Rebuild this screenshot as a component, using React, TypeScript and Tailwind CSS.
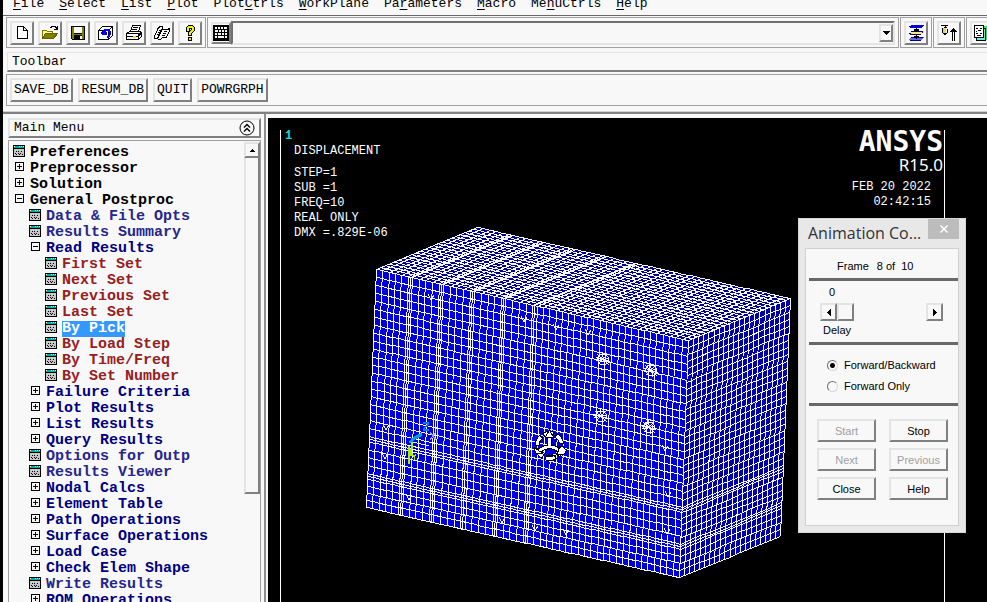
import { useState, type ReactNode } from "react";
import clsx from "clsx";

type Point = [number, number];

interface TreeItem {
  label: string;
  level: 0 | 1 | 2;
  kind: "sheet" | "open" | "closed";
}

const menus = [
  ["", "F", "ile"],
  ["", "S", "elect"],
  ["", "L", "ist"],
  ["", "P", "lot"],
  ["Plot", "C", "trls"],
  ["", "W", "orkPlane"],
  ["Pa", "r", "ameters"],
  ["", "M", "acro"],
  ["Me", "n", "uCtrls"],
  ["", "H", "elp"],
];

const tree: TreeItem[] = [
  { label: "Preferences", level: 0, kind: "sheet" },
  { label: "Preprocessor", level: 0, kind: "closed" },
  { label: "Solution", level: 0, kind: "closed" },
  { label: "General Postproc", level: 0, kind: "open" },
  { label: "Data & File Opts", level: 1, kind: "sheet" },
  { label: "Results Summary", level: 1, kind: "sheet" },
  { label: "Read Results", level: 1, kind: "open" },
  { label: "First Set", level: 2, kind: "sheet" },
  { label: "Next Set", level: 2, kind: "sheet" },
  { label: "Previous Set", level: 2, kind: "sheet" },
  { label: "Last Set", level: 2, kind: "sheet" },
  { label: "By Pick", level: 2, kind: "sheet" },
  { label: "By Load Step", level: 2, kind: "sheet" },
  { label: "By Time/Freq", level: 2, kind: "sheet" },
  { label: "By Set Number", level: 2, kind: "sheet" },
  { label: "Failure Criteria", level: 1, kind: "closed" },
  { label: "Plot Results", level: 1, kind: "closed" },
  { label: "List Results", level: 1, kind: "closed" },
  { label: "Query Results", level: 1, kind: "closed" },
  { label: "Options for Outp", level: 1, kind: "sheet" },
  { label: "Results Viewer", level: 1, kind: "sheet" },
  { label: "Nodal Calcs", level: 1, kind: "closed" },
  { label: "Element Table", level: 1, kind: "closed" },
  { label: "Path Operations", level: 1, kind: "closed" },
  { label: "Surface Operations", level: 1, kind: "closed" },
  { label: "Load Case", level: 1, kind: "closed" },
  { label: "Check Elem Shape", level: 1, kind: "closed" },
  { label: "Write Results", level: 1, kind: "sheet" },
  { label: "ROM Operations", level: 1, kind: "closed" },
];

const raised =
  "border-2 border-t-[#e4e4e4] border-l-[#e4e4e4] border-r-[#808080] border-b-[#808080] bg-[#f8f8f8]";
const mono = "font-['Liberation_Mono',monospace]";

/* ---------- toolbar icons ---------- */

function Icon({ children }: { children: ReactNode }) {
  return (
    <svg
      className="shrink-0"
      width="18"
      height="18"
      viewBox="0 0 18 18"
      shapeRendering="crispEdges"
      fill="none"
    >
      {children}
    </svg>
  );
}

const NewIcon = () => (
  <Icon>
    <path d="M4.500 2.500h6l4 4v8h-10zM10.500 2.500v4h4" stroke="#000" fill="#fff" />
  </Icon>
);

const OpenIcon = () => (
  <Icon>
    <path d="M1.500 14V6.500h4l1 1h5v3" fill="#ffff66" stroke="#777700" />
    <path d="M1.500 14.500l3-5h12l-4 5z" fill="#808000" stroke="#606000" />
    <path d="M9 3.500h1v-1h4v1h1v2M16.500 2v4M13 5.500h4" stroke="#000" />
  </Icon>
);

const SaveIcon = () => (
  <Icon>
    <path d="M2.500 2.500h13v13h-12l-1-1z" fill="#808000" stroke="#000" />
    <path d="M5 3h8v6H5z" fill="#f8f8f8" />
    <path d="M5 11h8v5H5z" fill="#000" />
    <path d="M11 12h2v3h-2z" fill="#fff" />
    <path d="M5 9.500h8" stroke="#000" />
  </Icon>
);

const RestoreIcon = () => (
  <Icon>
    <path d="M1 6h10v10H1zM2 5l3-3h11v9l-4 4V6z" fill="#fff" />
    <path d="M1.500 6.500h10v9h-10zM1.500 6.500l4-4h10l-4 4M15.500 2.500v9l-4 4" stroke="#000" />
    <path d="M4 8h1V7h1V6h1V5h5v1h1v1h1v4h-1v2h-1v1h-2v-2h1v-1h1V8h-1V7H9v1h1v3H5v-1H4z" fill="#0000ee" />
  </Icon>
);

const PrintIcon = () => (
  <Icon>
    <path d="M5.500 7.500l2-6h8l-2 6M8 3.500h5M7 5.500h5" stroke="#000" fill="#fff" />
    <path
      d="M1.500 9.500l3-2h10l2 1v4l-3 3h-12zM1.500 9.500h12v6M13.500 9.500l3-1M2 12.500h11M13 12.500l3-3"
      stroke="#000"
    />
    <path d="M8 12h3v2H8z" fill="#e6e600" />
  </Icon>
);

const ReportIcon = () => (
  <Icon>
    <path d="M5.500 3.500l2-1h2v2l-4 8-1 2h-3v-2zM9.500 4.500l1 1h4l2-1v2l-3 7h-4l-2 2h-3" stroke="#000" />
    <path d="M6 6.500h2M5 8.500h2M4 10.500h2M11 7.500h3M10 9.500h3M9 11.500h3" stroke="#000" />
  </Icon>
);

const HelpIcon = () => (
  <Icon>
    <path
      d="M5.500 7V3.500l2-2h4l2 2v3l-3 3v2h-3v-3l3-3v-1h-2V7zM7.500 13.500h3v3h-3z"
      fill="#e6e600"
      stroke="#000"
    />
    <path d="M6 6.500V4l2-2h3l2 2v2l-3 3v2H8V9l3-3V4H8v2.500z" fill="#f0f000" />
  </Icon>
);

const KeyboardIcon = () => (
  <svg width="16" height="16" viewBox="0 0 16 16" shapeRendering="crispEdges">
    <path d="M0 0h16v16H0z" fill="#000" />
    <path
      d="M2 2h2v2H2zM5 2h2v2H5zM8 2h2v2H8zM11 2h3v2h-3zM2 5h3v2H2zM6 5h2v2H6zM9 5h2v2H9zM12 5h2v2h-2zM2 8h2v2H2zM5 8h3v2H5zM9 8h2v2H9zM12 8h2v2h-2zM2 11h2v2H2zM5 11h6v2H5zM12 11h2v2h-2z"
      fill="#f8f8f8"
    />
  </svg>
);

const LayersIcon = () => (
  <Icon>
    <path d="M4 1h13v1h-1v1h-1v1H3V3H2V2h2z" fill="#0000dd" />
    <path d="M4 7h13v1h-1v1h-1v1h-1v1H3v-1H2V9h1V8h1z" fill="#ffe680" />
    <path d="M4 7.500h12M2 9.500h2M3 10.500h11M15 8.500h1" stroke="#000080" />
    <path d="M4 13h13v1h-1v1h-1v1h-1v1H3v-1H2v-1h1v-1h1z" fill="#6666ff" />
    <path d="M4 13.500h12M3 16.500h11" stroke="#000080" />
    <path d="M9 4h1v1h2v2h-2v1H9V7H7V5h2zM9 11h1v1h2v2h-2v1H9v-1H7v-2h2z" fill="#000" />
  </Icon>
);

const RaiseIcon = () => (
  <Icon>
    <path d="M1 1.500h7M5 1v2M3.500 3h3M2.500 4v5M3 9.500h4M7.500 5v4M4 10.500h2" stroke="#000" />
    <path d="M3 4h3v5H3z" fill="#e6d060" />
    <path d="M12.500 5v12M14.500 5v12" stroke="#000" />
    <path d="M13 4h1v1h1v1h1v1h1v1h-7V7h1V6h1V5h1z" fill="#000" />
  </Icon>
);

const ContactIcon = () => (
  <Icon>
    <path d="M10 2h8v14h-8z" fill="#00ff40" />
    <path d="M3.500 4.500h9v12h-9z" fill="#66e6e6" stroke="#000" />
    <path d="M1.500 1.500h9v12h-9z" fill="#fff" stroke="#000" />
    <path d="M3 4.500h2M7 4.500h2M3 7.500h1M5 6.500h3M3 9.500h2M7 9.500h2M4 11.500h4" stroke="#000" />
  </Icon>
);

const fileTools = [
  { label: "New Analysis", icon: <NewIcon /> },
  { label: "Open File", icon: <OpenIcon /> },
  { label: "Save", icon: <SaveIcon /> },
  { label: "Restore", icon: <RestoreIcon /> },
  { label: "Print", icon: <PrintIcon /> },
  { label: "Report Generator", icon: <ReportIcon /> },
  { label: "Help", icon: <HelpIcon /> },
];

function ToolButton({ label, children }: { label: string; children: ReactNode }) {
  return (
    <button
      aria-label={label}
      className={clsx("flex size-6 shrink-0 items-center justify-center", raised)}
    >
      {children}
    </button>
  );
}

function ToolGroup({ children, className }: { children: ReactNode; className?: string }) {
  return (
    <div className={clsx("flex items-center border border-[#a0a0a0] px-[3px]", className)}>
      {children}
    </div>
  );
}

/* ---------- main menu ---------- */

function NodeIcon({ kind }: { kind: TreeItem["kind"] }) {
  if (kind === "sheet") {
    return (
      <svg width="12" height="12" viewBox="0 0 12 12" shapeRendering="crispEdges">
        <path d="M0 0h12v12H0z" fill="#000" />
        <path d="M1 1h10v2H1z" fill="#00a8a8" />
        <path d="M1 1h1v1H1z" fill="#ffff80" />
        <path d="M6 1h1v1H6zM8 1h1v1H8zM10 1h1v1h-1z" fill="#a0ffff" />
        <path d="M1 4h10v7H1z" fill="#c8c8c8" />
        <path
          d="M3 6h1v1H3zM5 6h1v1H5zM8 6h1v1H8zM2 8h1v1H2zM5 8h1v1H5zM7 8h1v1H7zM3 9h1v1H3zM6 9h1v1H6zM9 9h1v1H9z"
          fill="#000"
        />
      </svg>
    );
  }
  return (
    <svg width="12" height="12" viewBox="0 0 12 12" shapeRendering="crispEdges" fill="none" stroke="#000">
      <path d="M2.500 1.500h8v8h-8zM4 5.500h5" />
      {kind === "closed" && <path d="M6.500 3v5" />}
    </svg>
  );
}

const indents = ["pl-1", "pl-5", "pl-9"];

function labelColor({ level, kind }: TreeItem) {
  if (level === 0) return "text-black";
  if (level === 2) return "text-[#962020]";
  return kind === "sheet" ? "text-[#26268c]" : "text-[#000080]";
}

function MainMenu() {
  const [selected, setSelected] = useState("By Pick");

  return (
    <aside className="flex w-[263px] shrink-0 flex-col border-r-2 border-[#909090] pt-1 pr-[3px] pl-[5px]">
      <header
        className={clsx("flex h-5 shrink-0 items-center justify-between pr-1 pl-1", raised)}
      >
        <h2 className="text-[13px] leading-4">Main Menu</h2>
        <button aria-label="Collapse menu">
          <svg width="16" height="16" viewBox="0 0 16 16" fill="none" stroke="#000">
            <circle cx="8" cy="8" r="7" />
            <path d="M5 7.500l3-3 3 3M5 11.500l3-3 3 3" strokeWidth="1.300" />
          </svg>
        </button>
      </header>
      <div className="mt-0.5 flex min-h-0 flex-1 border-x border-t border-[#a0a0a0]">
        <ul className="min-w-0 flex-1 overflow-hidden pt-1">
          {tree.map((item) => (
            <li key={item.label} className={clsx("h-4", indents[item.level])}>
              <button
                onClick={() => setSelected(item.label)}
                className="flex h-4 text-[15px] leading-4 font-bold whitespace-nowrap"
              >
                <span className="w-[17px] shrink-0">
                  <NodeIcon kind={item.kind} />
                </span>
                <span
                  className={
                    item.label === selected ? "bg-[#3399ff] text-white" : labelColor(item)
                  }
                >
                  {item.label}
                </span>
              </button>
            </li>
          ))}
        </ul>
        <div className="flex w-4 shrink-0 flex-col pt-px">
          <button
            aria-label="Scroll up"
            className={clsx("flex h-4 shrink-0 items-center justify-center", raised)}
          >
            <svg width="5" height="3" viewBox="0 0 5 3" shapeRendering="crispEdges">
              <path d="M2 0h1v1h1v1h1v1H0V2h1V1h1z" />
            </svg>
          </button>
          <div className={clsx("h-[73%] border-t-0", raised)} />
        </div>
      </div>
    </aside>
  );
}

/* ---------- finite element model ---------- */

const A: Point = [376, 269];
const B: Point = [366, 507];
const C: Point = [679, 577];
const D: Point = [688, 340];
const E: Point = [790, 298];
const F: Point = [780, 536];
const G: Point = [477, 227];

const columnBands = [0.108, 0.208, 0.308, 0.408, 0.508];
const rowBands = [0.714, 0.87];

// bilinear position on the face p-q-r-s, u along p-q and v along p-s
function at(face: Point[], u: number, v: number): Point {
  const [p, q, r, s] = face;
  const mix = (i: 0 | 1) =>
    p[i] * (1 - u) * (1 - v) + q[i] * u * (1 - v) + r[i] * u * v + s[i] * (1 - u) * v;
  return [mix(0), mix(1)];
}

// each band is three close lines; the spans between bands get equal cells
function steps(count: number, bands: number[] = [], gap = 0) {
  const result = [0];
  const fill = (to: number) => {
    const from = result[result.length - 1];
    const cells = Math.max(1, Math.round((to - from) * count));
    for (let i = 1; i <= cells; i++) result.push(from + ((to - from) * i) / cells);
  };
  for (const b of bands) {
    fill(b - gap);
    result.push(b, b + gap);
  }
  fill(1);
  return result;
}

function mesh(face: Point[], us: number[], vs: number[]) {
  const node = (u: number, v: number) => {
    const [x, y] = at(face, u, v);
    return `${Math.round(x) + 0.5} ${Math.round(y) + 0.5}`;
  };
  const rows = vs.map((v) => "M" + us.map((u) => node(u, v)).join("L"));
  const columns = us.map((u) => `M${node(u, vs[0])}L${node(u, vs[vs.length - 1])}`);
  return [...rows, ...columns].join("");
}

const frontFace = [A, D, C, B];
const sideFace = [D, E, F, C];
const topFace = [A, D, E, G];

const frontMesh = mesh(frontFace, steps(50, columnBands, 0.0068), steps(30, rowBands, 0.011));
const sideMesh = mesh(sideFace, steps(20), steps(34, rowBands, 0.011));
const topMesh = mesh(topFace, steps(50, columnBands, 0.0068), steps(23));

const outline = (face: Point[]) => face.map((p) => p.join(",")).join(" ");

const holes: Point[] = [
  [603, 359],
  [651, 370],
  [601, 416],
  [649, 427],
];

const splits: Point[] = [
  [431, 298],
  [524, 320],
  [556, 328],
  [588, 333],
  [409, 498],
  [502, 521],
  [535, 529],
  [566, 533],
  [386, 428],
  [385, 457],
  [665, 449],
  [668, 495],
  [667, 532],
];

function Model() {
  return (
    <svg
      className="absolute top-0 left-0"
      width="719"
      height="484"
      viewBox="268 118 719 484"
      fill="none"
      shapeRendering="crispEdges"
      aria-label="Deformed mesh"
    >
      <polygon points={outline(topFace)} fill="#000088" />
      <polygon points={outline(frontFace)} fill="#0000dd" />
      <polygon points={outline(sideFace)} fill="#0000aa" />
      <path d={topMesh} stroke="#f8f8f8" />
      <path d={sideMesh} stroke="#f8f8f8" />
      <path d={frontMesh} stroke="#f8f8f8" />
      {splits.map(([x, y]) => (
        <path key={`${x}-${y}`} d={`M${x - 3} ${y - 4}l3 6 3-5`} stroke="#f8f8f8" />
      ))}
      {holes.map(([x, y]) => (
        <path
          key={`${x}-${y}`}
          transform={`translate(${x} ${y})`}
          d="M-7-2L7 3M-5 5L5-5M-1-7L2 7M-6-5L6 6M-7 2L6-1M-3-5h6l3 5-3 5h-6l-3-5z"
          stroke="#f8f8f8"
        />
      ))}
      {/* axis triad */}
      <path d="M410 443l3-4 9-5" stroke="#00a0e0" strokeWidth="3" />
      <path d="M413 442l16 4" stroke="#e8e8ff" />
      <path d="M412 442l-1 14M409 446v18" stroke="#a8f000" strokeWidth="2" />
      <path d="M423 422.500h5v2l-4 4v1h5" stroke="#0080e0" strokeWidth="2" />
      <path d="M430 432l6 8M436 432l-6 8" stroke="#a0a0ff" />
      <path d="M412 454l2 3 2-3M414 457v3" stroke="#a8f000" />
      {/* dynamic rotation cursor */}
      <g transform="translate(549.500 446)">
        <circle r="12.500" stroke="#000" strokeWidth="5" strokeDasharray="11 2" />
        <circle r="12.500" stroke="#fff" strokeWidth="3" strokeDasharray="9 4" strokeDashoffset="-1" />
        <path d="M0 2v-13M-11 6q4-5 11-5t11 5" stroke="#000" strokeWidth="5" />
        <path d="M0 2v-13M-11 6q4-5 11-5t11 5" stroke="#fff" strokeWidth="3" />
        <path d="M-4-9l4-7 4 7zM-15 2l1 6 7-1zM9 3l3-3 5 4-2 4-7 1z" fill="#fff" stroke="#000" />
        <circle cy="6" r="4" fill="#0000dd" stroke="#000" />
      </g>
    </svg>
  );
}

/* ---------- animation dialog ---------- */

function Arrow({ flip = false }: { flip?: boolean }) {
  return (
    <svg width="4" height="7" viewBox="0 0 4 7" shapeRendering="crispEdges">
      <path
        d={flip ? "M0 0h1v1h1v1h1v1h1v1H3v1H2v1H1v1H0z" : "M4 0H3v1H2v1H1v1H0v1h1v1h1v1h1v1h1z"}
      />
    </svg>
  );
}

function AnimationDialog() {
  const [direction, setDirection] = useState("Forward/Backward");
  const [delay, setDelay] = useState(0);

  return (
    <section
      aria-label="Animation Controller"
      className="absolute top-[100px] left-[530px] w-[168px] border border-[#d8d8d8] bg-[#e8e8e8] px-1.5 pb-1.5 font-['Liberation_Sans',sans-serif] text-[11px] leading-4 text-black"
    >
      <header className="flex h-[29px] justify-between pl-[3px]">
        <h2 className="pt-1 font-['Open_Sans',sans-serif] text-base leading-5 text-[#333]">
          Animation Co...
        </h2>
        <button
          aria-label="Close window"
          className="flex h-5 w-[31px] items-center justify-center bg-[#bcbcbc]"
        >
          <svg width="8" height="8" viewBox="0 0 8 8" stroke="#fff" strokeWidth="1.500">
            <path d="M0.500 0.500l7 7M7.500 0.500l-7 7" />
          </svg>
        </button>
      </header>
      <div className="border border-[#d0d0d0] bg-[#f8f8f8] pl-[3px]">
        <p className="flex h-[29px] items-center gap-2 pt-1 pl-7">
          <span>Frame</span>
          <span>8 of&nbsp; 10</span>
        </p>
        <div className="h-[3px] bg-[#696969]" />
        <div className="flex h-[61px] flex-col pt-[3px] pl-[11px]">
          <output className="pl-[9px]" htmlFor="delay">
            {delay}
          </output>
          <div className="mt-[3px] flex h-[18px] w-[123px]">
            <button
              aria-label="Decrease delay"
              onClick={() => setDelay(Math.max(0, delay - 1))}
              className={clsx("flex w-[17px] items-center justify-center", raised)}
            >
              <Arrow />
            </button>
            <input
              id="delay"
              type="range"
              min={0}
              max={100}
              value={delay}
              onChange={(e) => setDelay(Number(e.target.value))}
              className="h-[18px] min-w-0 flex-1 appearance-none bg-transparent [&::-webkit-slider-thumb]:h-[18px] [&::-webkit-slider-thumb]:w-[17px] [&::-webkit-slider-thumb]:appearance-none [&::-webkit-slider-thumb]:border-2 [&::-webkit-slider-thumb]:border-t-[#e4e4e4] [&::-webkit-slider-thumb]:border-r-[#808080] [&::-webkit-slider-thumb]:border-b-[#808080] [&::-webkit-slider-thumb]:border-l-[#e4e4e4] [&::-webkit-slider-thumb]:bg-[#f8f8f8]"
            />
            <button
              aria-label="Increase delay"
              onClick={() => setDelay(Math.min(100, delay + 1))}
              className={clsx("flex w-[17px] items-center justify-center", raised)}
            >
              <Arrow flip />
            </button>
          </div>
          <label htmlFor="delay" className="pt-px pl-[3px]">
            Delay
          </label>
        </div>
        <div className="h-[3px] bg-[#696969]" />
        <div className="flex h-[58px] flex-col gap-[5px] pt-3 pl-[18px]">
          {["Forward/Backward", "Forward Only"].map((name) => (
            <label key={name} className="flex items-center gap-1.5">
              <input
                type="radio"
                name="direction"
                checked={direction === name}
                onChange={() => setDirection(name)}
                className="size-[11px] appearance-none rounded-full border border-t-[#707070] border-r-[#d8d8d8] border-b-[#d8d8d8] border-l-[#707070] bg-[#f8f8f8] checked:bg-[radial-gradient(circle,black_2px,transparent_3px)]"
              />
              {name}
            </label>
          ))}
        </div>
        <div className="h-[3px] bg-[#696969]" />
        <div className="grid grid-cols-2 gap-x-[13px] gap-y-1.5 pt-[13px] pr-2.5 pb-[25px] pl-2">
          {["Start", "Stop", "Next", "Previous", "Close", "Help"].map((name) => (
            <button
              key={name}
              disabled={name === "Start" || name === "Next" || name === "Previous"}
              className={clsx("h-[23px] disabled:text-[#a0a0a0]", raised)}
            >
              {name}
            </button>
          ))}
        </div>
      </div>
    </section>
  );
}

function Viewport() {
  return (
    <main className="relative mt-1 ml-0.5 min-w-0 flex-1 overflow-hidden bg-black text-xs text-white">
      <Model />
      <div className="absolute top-3 bottom-0 left-3 w-px bg-white" />
      <div className="absolute top-3 bottom-0 left-[676px] w-px bg-white" />
      <div className="absolute top-[11px] left-[17px] leading-[15px]">
        <p className="font-bold text-[#00e0e0]">1</p>
        <div className="pl-[9px]">
          <p>DISPLACEMENT</p>
          <pre className={clsx("mt-[7px]", mono)}>
            {"STEP=1\nSUB =1\nFREQ=10\nREAL ONLY\nDMX =.829E-06"}
          </pre>
        </div>
      </div>
      <div className="absolute top-[9px] left-[560px] w-[115px] text-right">
        <p className="font-['DejaVu_Sans_Mono',monospace] text-[28px] leading-[30px] font-bold">
          ANSYS
        </p>
        <p className="font-['Noto_Sans',sans-serif] text-[17px] leading-4">R15.0</p>
        <p className="mt-[7px] pr-3 leading-[15px]">FEB 20 2022</p>
        <p className="pr-3 leading-[15px]">02:42:15</p>
      </div>
      <AnimationDialog />
    </main>
  );
}

export default function App() {
  return (
    <div
      className={clsx(
        "flex h-screen flex-col overflow-hidden border-l-[3px] border-black bg-[#f8f8f8] text-black",
        mono
      )}
    >
      <nav className="flex h-4 shrink-0 items-end gap-[15px] border-b border-[#696969] pb-[3px] pl-2.5 text-[13px] leading-4">
        {menus.map(([before, key, after]) => (
          <button key={before + key + after}>
            {before}
            <span className="underline underline-offset-2">{key}</span>
            {after}
          </button>
        ))}
      </nav>

      <div className="mt-px ml-[3px] flex h-[31px] shrink-0 gap-px overflow-hidden">
        <ToolGroup className="gap-1">
          {fileTools.map((tool) => (
            <ToolButton key={tool.label} label={tool.label}>
              {tool.icon}
            </ToolButton>
          ))}
        </ToolGroup>
        <ToolGroup className="min-w-0 flex-1">
          <button
            aria-label="Command window"
            className={clsx("flex h-[22px] w-5 shrink-0 items-center justify-center", raised)}
          >
            <KeyboardIcon />
          </button>
          <div className="flex h-6 min-w-0 flex-1 items-center border-2 border-t-[#707070] border-r-[#e4e4e4] border-b-[#e4e4e4] border-l-[#707070]">
            <input
              aria-label="Command"
              className="h-full min-w-0 flex-1 bg-transparent px-1 text-[13px] outline-none"
            />
            <button
              aria-label="Command history"
              className={clsx("flex h-[18px] w-3.5 items-center justify-center", raised)}
            >
              <svg
                className="shrink-0"
                width="7"
                height="4"
                viewBox="0 0 7 4"
                shapeRendering="crispEdges"
              >
                <path d="M0 0h7v1H6v1H5v1H4v1H3V3H2V2H1V1H0z" />
              </svg>
            </button>
          </div>
        </ToolGroup>
        <ToolGroup>
          <ToolButton label="Raise hidden">
            <LayersIcon />
          </ToolButton>
        </ToolGroup>
        <ToolGroup>
          <ToolButton label="Reset picking">
            <RaiseIcon />
          </ToolButton>
        </ToolGroup>
        <ToolGroup className="w-[21px] border-r-0">
          <ToolButton label="Contact manager">
            <ContactIcon />
          </ToolButton>
        </ToolGroup>
      </div>

      <h1 className="mt-1 ml-1 flex h-5 shrink-0 items-center border-t border-b-2 border-l border-t-[#e4e4e4] border-b-[#808080] border-l-[#e4e4e4] pt-px pl-1 text-[13px] leading-4 font-normal">
        Toolbar
      </h1>
      <div className="mt-0.5 ml-[3px] flex h-8 shrink-0 items-center gap-[5px] border border-r-0 border-[#a0a0a0] px-[3px] text-[13px]">
        {["SAVE_DB", "RESUM_DB", "QUIT", "POWRGRPH"].map((name) => (
          <button key={name} className={clsx("h-6 px-0.5", raised)}>
            {name}
          </button>
        ))}
      </div>
      <div className="mt-[5px] h-[3px] shrink-0 border-t border-b-2 border-t-[#d0d0d0] border-b-[#808080]" />

      <div className="flex min-h-0 flex-1">
        <MainMenu />
        <Viewport />
      </div>
    </div>
  );
}
